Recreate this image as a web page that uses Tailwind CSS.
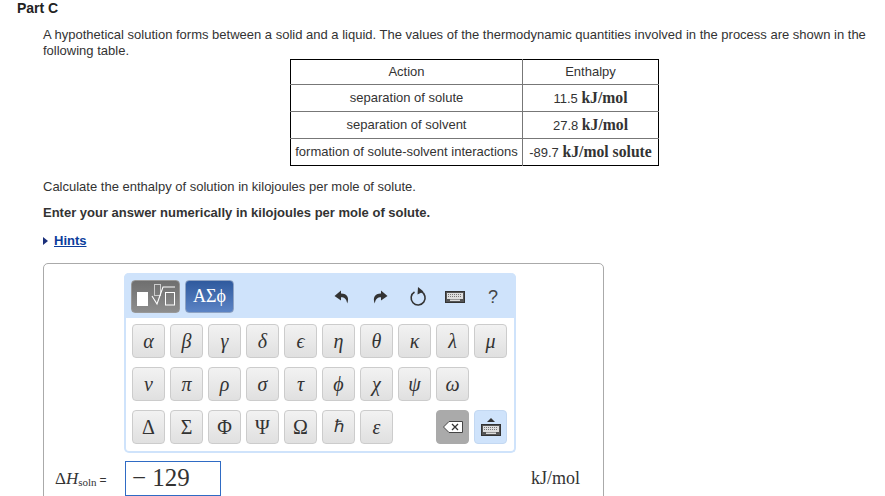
<!DOCTYPE html>
<html lang="en">
<head>
  <meta charset="UTF-8">
  <title>Part C</title>
  <script src="https://cdn.jsdelivr.net/npm/@tailwindcss/browser@4"></script>
</head>
<body class="bg-white h-[496px] overflow-hidden font-['Liberation_Sans',Arial,sans-serif] text-[#333]">

<div class="pl-[17px] pt-px">
  <h2 class="text-[14px] leading-[15px] font-bold text-[#222]">Part C</h2>

  <div class="pl-[26px]">
    <!-- Question -->
    <p class="mt-[11px] w-[830px] text-[13px] leading-[16px]">A hypothetical solution forms between a solid and a liquid. The values of the thermodynamic quantities involved in the process are shown in the following table.</p>

    <table class="ml-[247px] w-[369px] h-[106px] table-fixed border-collapse border border-black text-[13px] text-center">
      <tr class="h-[25px]">
        <td class="w-[232px] border-r border-[#777] pb-[1px]">Action</td>
        <td class="pb-[1px]">Enthalpy</td>
      </tr>
      <tr class="h-[27px] border-t border-[#777]">
        <td class="border-r border-[#777]">separation of solute</td>
        <td>11.5 <span class="font-['Liberation_Serif',serif] text-[15.7px] font-bold">kJ/mol</span></td>
      </tr>
      <tr class="h-[27px] border-t border-[#777]">
        <td class="border-r border-[#777]">separation of solvent</td>
        <td>27.8 <span class="font-['Liberation_Serif',serif] text-[15.7px] font-bold">kJ/mol</span></td>
      </tr>
      <tr class="h-[27px] border-t border-[#777]">
        <td class="border-r border-[#777] whitespace-nowrap">formation of solute-solvent interactions</td>
        <td class="whitespace-nowrap">-89.7 <span class="font-['Liberation_Serif',serif] text-[15.7px] font-bold">kJ/mol solute</span></td>
      </tr>
    </table>

    <p class="mt-[13px] text-[13px] leading-[16px]">Calculate the enthalpy of solution in kilojoules per mole of solute.</p>
    <p class="mt-[10px] text-[13px] leading-[16px] font-bold">Enter your answer numerically in kilojoules per mole of solute.</p>

    <div class="mt-[12px] flex items-center gap-[6px] h-[16px]">
      <svg width="5" height="8" viewBox="0 0 5 8"><path d="M0 0 L5 4 L0 8 Z" fill="#1a2f7a"/></svg>
      <a class="text-[13px] font-bold text-[#0b3d9c] underline">Hints</a>
    </div>

    <!-- Answer box -->
    <div class="mt-[14px] w-[561px] h-[240px] border border-[#aaa] rounded-t-[5px] relative">
      <!-- Math palette -->
      <div class="ml-[80px] mt-[9px] w-[392px] h-[180px] rounded-[5px] border-2 border-t-0 border-[#cfe3fb] bg-white">
        <div class="h-[45px] -mx-[2px] bg-[#cfe3fb] rounded-t-[5px] flex items-center pl-[7px] pt-[1px]">
          <div class="w-[49px] h-[33px] rounded-[4px] border border-[#999] bg-gradient-to-b from-[#6f6f6f] to-[#8d8d8d] flex items-center pl-[5px] gap-[3px]">
            <span class="w-[11px] h-[14px] bg-white mt-[5px]"></span>
            <svg width="25" height="24" viewBox="0 0 25 24" fill="none" stroke="#fff" stroke-width="1">
              <rect x="3.5" y="0.5" width="6" height="11" stroke="#ccc"/>
              <path d="M1 12 L6 20 L12 3 L24 3" stroke-width="1.1"/>
              <rect x="14.5" y="8.5" width="9" height="12.5"/>
            </svg>
          </div>
          <div class="ml-[5px] w-[49px] h-[33px] rounded-[4px] border border-[#8ea3c4] bg-gradient-to-b from-[#2f5a9e] to-[#5b83c4] flex items-center justify-center text-white font-['Liberation_Serif',serif] text-[18px]">ΑΣϕ</div>

          <div class="ml-auto mt-[2px] flex items-center">
            <svg width="16" height="14" viewBox="0 0 16 14" fill="#333" class="mr-[22px]"><path d="M7 0.5 L0.5 6 L7 10.5 L7 7.3 C10.5 7.3 12.5 9 13.2 13.5 C15.5 8 13.5 3.8 7 3.6 Z"/></svg>
            <svg width="16" height="14" viewBox="0 0 16 14" fill="#333" class="mr-[21px]"><path d="M9 0.5 L15.5 6 L9 10.5 L9 7.3 C5.5 7.3 3.5 9 2.8 13.5 C0.5 8 2.5 3.8 9 3.6 Z"/></svg>
            <svg width="18" height="20" viewBox="0 0 18 20" fill="none" class="mr-[18px]"><path d="M5.5 5 A7 7 0 1 0 12 4.6" stroke="#333" stroke-width="1.6"/><path d="M9 0 L14.5 4.5 L8.5 7.5 Z" fill="#333"/></svg>
            <svg width="20" height="12" viewBox="0 0 20 12" class="mr-[23px]"><rect x="0.5" y="0.5" width="19" height="11" fill="#555" stroke="#333"/><rect x="2" y="2" width="16" height="6" fill="#ddd"/><path d="M3 3.5H17M3 5.5H17" stroke="#777" stroke-dasharray="1 1"/><rect x="5" y="8.5" width="10" height="1.5" fill="#ddd"/></svg>
            <span class="mr-[18px] text-[18px] text-[#444]">?</span>
          </div>
        </div>

        <div class="pl-[6px] pt-[6px] flex flex-col gap-[9px] font-['Liberation_Serif',serif] text-[20px] text-[#333]">
          <div class="flex gap-[5px] italic">
            <div class="w-[33px] h-[34px] rounded-[4px] border border-[#ccc] bg-gradient-to-b from-[#f2f2f2] to-[#e0e0e0] flex items-center justify-center">α</div>
            <div class="w-[33px] h-[34px] rounded-[4px] border border-[#ccc] bg-gradient-to-b from-[#f2f2f2] to-[#e0e0e0] flex items-center justify-center">β</div>
            <div class="w-[33px] h-[34px] rounded-[4px] border border-[#ccc] bg-gradient-to-b from-[#f2f2f2] to-[#e0e0e0] flex items-center justify-center">γ</div>
            <div class="w-[33px] h-[34px] rounded-[4px] border border-[#ccc] bg-gradient-to-b from-[#f2f2f2] to-[#e0e0e0] flex items-center justify-center">δ</div>
            <div class="w-[33px] h-[34px] rounded-[4px] border border-[#ccc] bg-gradient-to-b from-[#f2f2f2] to-[#e0e0e0] flex items-center justify-center">ϵ</div>
            <div class="w-[33px] h-[34px] rounded-[4px] border border-[#ccc] bg-gradient-to-b from-[#f2f2f2] to-[#e0e0e0] flex items-center justify-center">η</div>
            <div class="w-[33px] h-[34px] rounded-[4px] border border-[#ccc] bg-gradient-to-b from-[#f2f2f2] to-[#e0e0e0] flex items-center justify-center">θ</div>
            <div class="w-[33px] h-[34px] rounded-[4px] border border-[#ccc] bg-gradient-to-b from-[#f2f2f2] to-[#e0e0e0] flex items-center justify-center">κ</div>
            <div class="w-[33px] h-[34px] rounded-[4px] border border-[#ccc] bg-gradient-to-b from-[#f2f2f2] to-[#e0e0e0] flex items-center justify-center">λ</div>
            <div class="w-[33px] h-[34px] rounded-[4px] border border-[#ccc] bg-gradient-to-b from-[#f2f2f2] to-[#e0e0e0] flex items-center justify-center">μ</div>
          </div>
          <div class="flex gap-[5px] italic">
            <div class="w-[33px] h-[34px] rounded-[4px] border border-[#ccc] bg-gradient-to-b from-[#f2f2f2] to-[#e0e0e0] flex items-center justify-center">ν</div>
            <div class="w-[33px] h-[34px] rounded-[4px] border border-[#ccc] bg-gradient-to-b from-[#f2f2f2] to-[#e0e0e0] flex items-center justify-center">π</div>
            <div class="w-[33px] h-[34px] rounded-[4px] border border-[#ccc] bg-gradient-to-b from-[#f2f2f2] to-[#e0e0e0] flex items-center justify-center">ρ</div>
            <div class="w-[33px] h-[34px] rounded-[4px] border border-[#ccc] bg-gradient-to-b from-[#f2f2f2] to-[#e0e0e0] flex items-center justify-center">σ</div>
            <div class="w-[33px] h-[34px] rounded-[4px] border border-[#ccc] bg-gradient-to-b from-[#f2f2f2] to-[#e0e0e0] flex items-center justify-center">τ</div>
            <div class="w-[33px] h-[34px] rounded-[4px] border border-[#ccc] bg-gradient-to-b from-[#f2f2f2] to-[#e0e0e0] flex items-center justify-center">ϕ</div>
            <div class="w-[33px] h-[34px] rounded-[4px] border border-[#ccc] bg-gradient-to-b from-[#f2f2f2] to-[#e0e0e0] flex items-center justify-center">χ</div>
            <div class="w-[33px] h-[34px] rounded-[4px] border border-[#ccc] bg-gradient-to-b from-[#f2f2f2] to-[#e0e0e0] flex items-center justify-center">ψ</div>
            <div class="w-[33px] h-[34px] rounded-[4px] border border-[#ccc] bg-gradient-to-b from-[#f2f2f2] to-[#e0e0e0] flex items-center justify-center">ω</div>
          </div>
          <div class="flex gap-[5px]">
            <div class="w-[33px] h-[34px] rounded-[4px] border border-[#ccc] bg-gradient-to-b from-[#f2f2f2] to-[#e0e0e0] flex items-center justify-center">Δ</div>
            <div class="w-[33px] h-[34px] rounded-[4px] border border-[#ccc] bg-gradient-to-b from-[#f2f2f2] to-[#e0e0e0] flex items-center justify-center">Σ</div>
            <div class="w-[33px] h-[34px] rounded-[4px] border border-[#ccc] bg-gradient-to-b from-[#f2f2f2] to-[#e0e0e0] flex items-center justify-center">Φ</div>
            <div class="w-[33px] h-[34px] rounded-[4px] border border-[#ccc] bg-gradient-to-b from-[#f2f2f2] to-[#e0e0e0] flex items-center justify-center">Ψ</div>
            <div class="w-[33px] h-[34px] rounded-[4px] border border-[#ccc] bg-gradient-to-b from-[#f2f2f2] to-[#e0e0e0] flex items-center justify-center">Ω</div>
            <div class="w-[33px] h-[34px] rounded-[4px] border border-[#ccc] bg-gradient-to-b from-[#f2f2f2] to-[#e0e0e0] flex items-center justify-center text-[17px]">ℏ</div>
            <div class="w-[33px] h-[34px] rounded-[4px] border border-[#ccc] bg-gradient-to-b from-[#f2f2f2] to-[#e0e0e0] flex items-center justify-center italic">ε</div>
            <div class="ml-[38px] w-[33px] h-[34px] rounded-[4px] border border-[#aaa] bg-[#aaa] flex items-center justify-center">
              <svg width="20" height="12" viewBox="0 0 20 12"><path d="M6 0.5 H19.5 V11.5 H6 L0.5 6 Z" fill="#fff" stroke="#444"/><path d="M9 3 L15 9 M15 3 L9 9" stroke="#333" stroke-width="1.3"/></svg>
            </div>
            <div class="w-[33px] h-[34px] rounded-[4px] border border-[#c3d8f2] bg-[#cfe3fb] flex flex-col items-center justify-center gap-[2px]">
              <svg width="8" height="4" viewBox="0 0 8 4"><path d="M0 4 L4 0 L8 4 Z" fill="#333"/></svg>
              <svg width="20" height="12" viewBox="0 0 20 12"><rect x="0.5" y="0.5" width="19" height="11" fill="#555" stroke="#333"/><rect x="2" y="2" width="16" height="6" fill="#ddd"/><path d="M3 3.5H17M3 5.5H17" stroke="#777" stroke-dasharray="1 1"/><rect x="5" y="8.5" width="10" height="1.5" fill="#ddd"/></svg>
            </div>
          </div>
        </div>
      </div>

      <!-- Answer row -->
      <div class="mt-[8px] flex items-center h-[35px] pl-[11px] font-['Liberation_Serif',serif] text-[#333]">
        <div class="w-[70px] text-[17px] whitespace-nowrap">Δ<i>H</i><sub class="text-[11px] -bottom-[2px]">soln</sub><span class="ml-[3px] text-[12px] font-['Liberation_Sans',sans-serif]">=</span></div>
        <div class="w-[96px] h-[35px] border border-[#2f6bc4] flex items-center pl-[6px] pb-[2px] text-[25px]">− 129</div>
        <div class="ml-[310px] text-[18px]">kJ/mol</div>
      </div>
    </div>
  </div>
</div>

</body>
</html>
